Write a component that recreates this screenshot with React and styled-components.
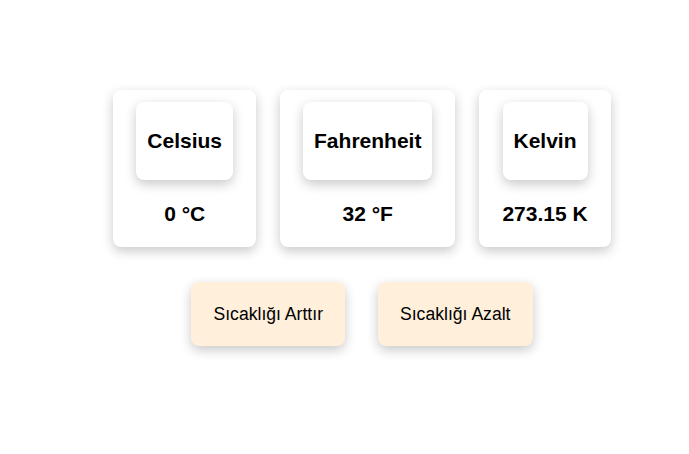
import styled, { createGlobalStyle } from "styled-components";

const GlobalStyle = createGlobalStyle`
    html, body {
        margin: 0;
        padding: 0;
        background-color: #FFFFFF;
        font-family: "Liberation Sans", Arial, sans-serif;
        color: #000000;
    }
`

const scales = [
    { name: "Celsius", value: "0 °C" },
    { name: "Fahrenheit", value: "32 °F" },
    { name: "Kelvin", value: "273.15 K" },
];

export default function App() {
    return (
        <>
            <GlobalStyle />
            <Page>
                <Cards>
                    {scales.map((s) =>
                        <Card key={s.name}>
                            <Baslik>{s.name}</Baslik>
                            <Deger>{s.value}</Deger>
                        </Card>
                    )}
                </Cards>
                <Butonlar>
                    <Buton>Sıcaklığı Arttır</Buton>
                    <Buton>Sıcaklığı Azalt</Buton>
                </Butonlar>
            </Page>
        </>
    )
}

const Page = styled.div`
    width: 100%;
    height: 454px;
    box-sizing: border-box;
    padding: 90px 0 0 35px;
    display: flex;
    flex-direction: column;
    align-items: center;
    gap: 35px;
`

const Cards = styled.div`
    display: flex;
    gap: 24px;
`

const Card = styled.div`
    background-color: #FFFFFF;
    border-radius: 8px;
    box-shadow: 0 4px 12px rgba(0, 0, 0, 0.22);
    padding: 12px 23px 21px;
    display: flex;
    flex-direction: column;
    align-items: center;
    gap: 22px;
`

const Baslik = styled.div`
    height: 78px;
    padding: 0 11px;
    display: flex;
    align-items: center;
    justify-content: center;
    background-color: #FFFFFF;
    border-radius: 8px;
    box-shadow: 0 4px 12px rgba(0, 0, 0, 0.22);
    font-size: 21px;
    font-weight: 700;
`

const Deger = styled.div`
    font-size: 21px;
    font-weight: 700;
    line-height: 24px;
`

const Butonlar = styled.div`
    display: flex;
    gap: 33px;
`

const Buton = styled.button`
    height: 64px;
    padding: 0 22px;
    border: none;
    border-radius: 8px;
    background-color: #FFEFDB;
    box-shadow: 0 4px 12px rgba(0, 0, 0, 0.22);
    font-family: "Liberation Sans", Arial, sans-serif;
    font-size: 17.6px;
    color: #000000;
    cursor: pointer;
`
